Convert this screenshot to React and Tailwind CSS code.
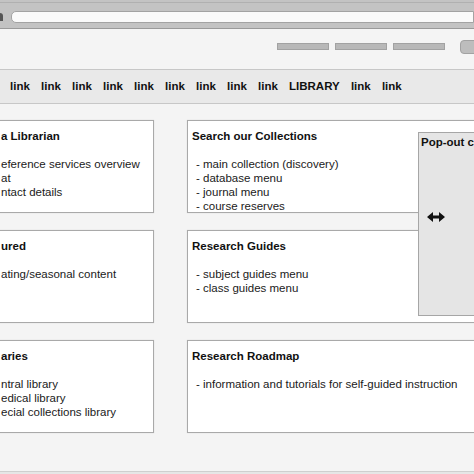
const font = { fontFamily: '"Liberation Sans", Arial, sans-serif' };

const navLinks = ['link', 'link', 'link', 'link', 'link', 'link', 'link', 'link', 'link', 'LIBRARY', 'link', 'link'];

const leftCards = [
  { title: 'a Librarian', items: ['eference services overview', 'at', 'ntact details'] },
  { title: 'ured', items: ['ating/seasonal content'] },
  { title: 'aries', items: ['ntral library', 'edical library', 'ecial collections library'] },
];

const rightCards = [
  { title: 'Search our Collections', items: ['main collection (discovery)', 'database menu', 'journal menu', 'course reserves'] },
  { title: 'Research Guides', items: ['subject guides menu', 'class guides menu'] },
  { title: 'Research Roadmap', items: ['information and tutorials for self-guided instruction'] },
];

function Card({ card, left }) {
  return (
    <div
      className={`h-[93px] shrink-0 border border-[#a9a9a9] bg-white pt-[8px] text-[11.5px] leading-[14px] text-[#1a1a1a] shadow-[0_0_1px_rgba(0,0,0,0.15)] ${
        left ? '-ml-[10px] w-[164px] pl-[10px]' : 'w-[320px] pl-[4px]'
      }`}
    >
      <div className="font-bold text-[#111]">{card.title}</div>
      <div className="mt-[14px]">
        {card.items.map((item, i) => (
          <div key={i} className="whitespace-nowrap">
            {left ? item : <span className="pl-[4px]">- {item}</span>}
          </div>
        ))}
      </div>
    </div>
  );
}

export default function App() {
  return (
    <div className="relative h-[474px] w-[474px] overflow-hidden bg-[#f4f4f4]" style={font}>
      {/* browser chrome */}
      <div className="h-[29px] border-b border-[#9a9a9a] bg-[#c3c3c3]">
        <div className="h-[3px] border-b border-[#b0b0b0]" />
        <div className="flex items-start pt-[8px]">
          <div className="mt-[2px] h-[8px] w-[3px] shrink-0 rounded-tr-[3px] bg-[#555]" />
          <div className="ml-[8px] h-[12px] flex-1 rounded-l-[5px] border border-[#a3a3a3] bg-[#fafafa]" />
        </div>
      </div>

      {/* header utility bars */}
      <div className="flex h-[40px] items-start bg-[#f4f4f4] pl-[277px] pt-[11px]">
        <div className="mt-[3px] h-[7px] w-[52px] shrink-0 border border-[#a2a2a2] bg-[#b8b8b8]" />
        <div className="ml-[6px] mt-[3px] h-[7px] w-[52px] shrink-0 border border-[#a2a2a2] bg-[#b8b8b8]" />
        <div className="ml-[6px] mt-[3px] h-[7px] w-[52px] shrink-0 border border-[#a2a2a2] bg-[#b8b8b8]" />
        <div className="ml-[15px] h-[14px] w-[40px] shrink-0 rounded-[4px] border border-[#a2a2a2] bg-[#bdbdbd]" />
      </div>

      {/* nav */}
      <div className="flex h-[35px] items-center gap-[11.2px] border-y border-[#c7c7c7] bg-[#e9e9e9] pl-[10px] text-[11.5px] font-bold text-[#111]">
        {navLinks.map((l, i) => (
          <span key={i}>{l}</span>
        ))}
      </div>

      {/* content */}
      <div className="flex flex-col gap-[17px] pt-[16px]">
        {leftCards.map((card, i) => (
          <div key={i} className="flex gap-[33px]">
            <Card card={card} left />
            <Card card={rightCards[i]} />
          </div>
        ))}
      </div>

      <div className="absolute bottom-0 left-0 h-[3px] w-full border-t border-[#cfcfcf] bg-[#e6e6e6]" />

      {/* pop-out panel */}
      <div className="absolute left-[418px] top-[132px] h-[184px] w-[80px] border border-[#a6a6a6] bg-[#e5e5e5] pl-[2px]">
        <div className="text-[11.5px] font-bold leading-[18px] text-[#111]">Pop-out c</div>
        <svg className="ml-[6px] mt-[61px]" width="18" height="10" viewBox="0 0 18 10">
          <path d="M0 5 L6 0 L6 3.5 L12 3.5 L12 0 L18 5 L12 10 L12 6.5 L6 6.5 L6 10 Z" fill="#111" />
        </svg>
      </div>
    </div>
  );
}
